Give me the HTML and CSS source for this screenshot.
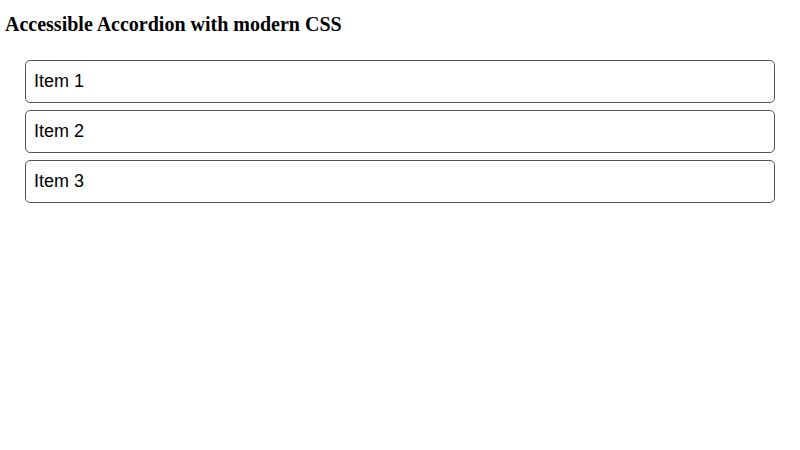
FILE: index.html
```html
<!DOCTYPE html>
<html lang="en">
<head>
    <meta charset="UTF-8">
    <meta name="viewport" content="width=device-width, initial-scale=1.0">
    <title>Accessible Accordion with modern CSS</title>
    <link rel="stylesheet" href="styles.css">
</head>
<body>

<h1>Accessible Accordion with modern CSS</h1>

<div class="accordion">
    <details class="accordion-item">
        <summary>Item 1</summary>
        <p>Content for the first item.</p>
    </details>
    <details class="accordion-item">
        <summary>Item 2</summary>
        <p>Content for the second item.</p>
    </details>
    <details class="accordion-item">
        <summary>Item 3</summary>
        <p>Content for the third item.</p>
    </details>
</div>

</body>
</html>
```

FILE: styles.css
```css
body {
    margin: 0;
    padding: 0 5px;
    font-family: "Liberation Serif", "Times New Roman", serif;
    color: #000;
    background: #fff;
}
h1 {
    font-size: 20px;
    margin: 13px 0 0 0;
}
.accordion {
    display: flex;
    flex-direction: column;
    gap: 7px;
    margin: 24px 20px 0 20px;
}
.accordion-item {
    border: 1px solid #555;
    border-radius: 5px;
    font-family: "Liberation Sans", Arial, sans-serif;
    font-size: 18px;
}
.accordion-item summary {
    list-style: none;
    padding: 10px 8px;
    cursor: pointer;
}
.accordion-item summary::-webkit-details-marker {
    display: none;
}
.accordion-item p {
    margin: 0;
    padding: 0 8px 11px 8px;
}
```
